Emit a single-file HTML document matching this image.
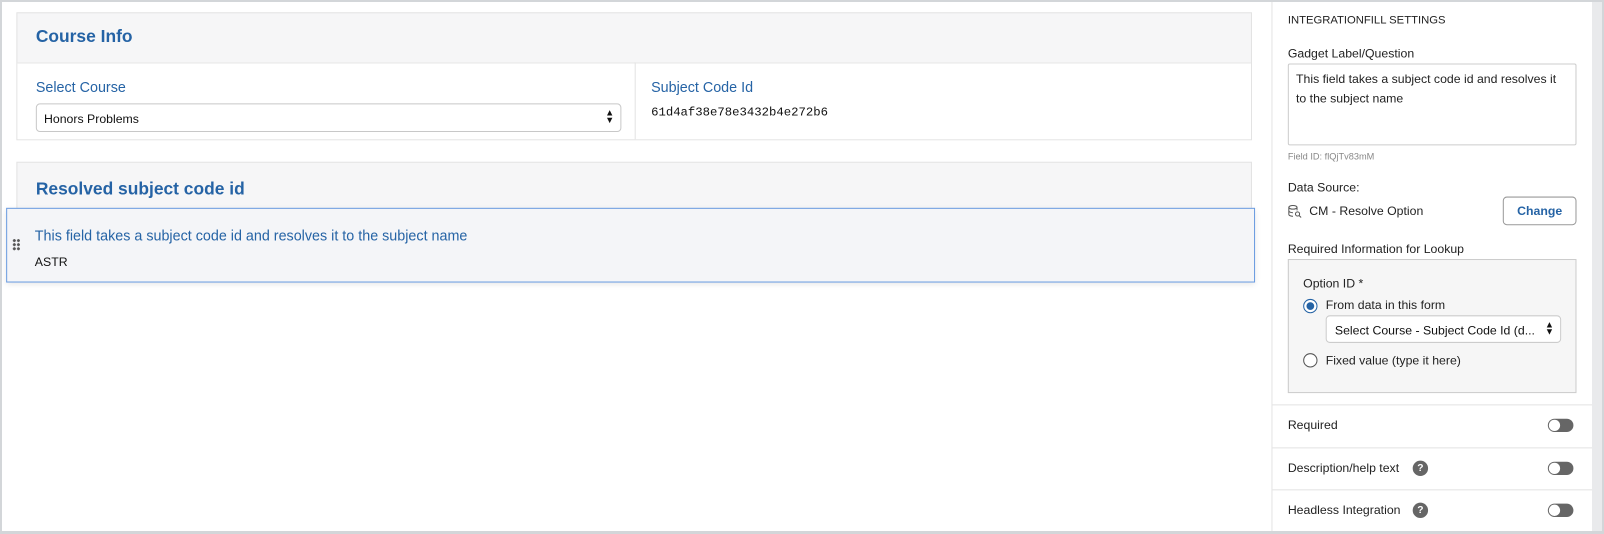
<!DOCTYPE html>
<html style="overflow:hidden"><head><style>
*{box-sizing:border-box;margin:0;padding:0}
html,body{width:1604px;height:534px;overflow:hidden}
body{background:#fff;font-family:"Liberation Sans",sans-serif;position:relative}
#clip{position:absolute;left:0;top:0;width:1604px;height:534px;overflow:hidden}
.frame{position:absolute;inset:0;border:2px solid #d3d6d9;border-bottom:3px solid #d3d6d9;z-index:5;pointer-events:none}
#w{position:absolute;left:0;top:0;width:1604px;height:522px;transform:scale(1.0237);transform-origin:0 0}
.abs{position:absolute}
.blue{color:#2563a5}
.sec{position:absolute;border:1px solid #e3e3e3;background:#f6f6f7}
.q{position:absolute;width:15px;height:15px;border-radius:50%;background:#666;color:#fff;font-size:10px;font-weight:bold;text-align:center;line-height:15px}
.tg{position:absolute;width:25px;height:13px;border-radius:7px;background:#666}
.tg div{position:absolute;left:1px;top:1px;width:11px;height:11px;border-radius:50%;background:#fff}
</style></head><body>
<div id="clip">
<div id="w">
<div class="sec" style="left:16px;top:12px;width:1207px;height:125px">
  <div class="abs blue" style="left:18px;top:13px;font-size:17px;font-weight:bold">Course Info</div>
  <div class="abs" style="left:0;top:48px;width:1205px;height:75px;background:#fff;border-top:1px solid #e6e6e6"></div>
  <div class="abs" style="left:603px;top:48px;width:1px;height:75px;background:#e3e3e3"></div>
  <div class="abs blue" style="left:18px;top:64px;font-size:14px">Select Course</div>
  <div class="abs" style="left:18px;top:88px;width:572px;height:28px;border:1px solid #c8c8c8;border-radius:4px;background:#fff;font-size:12px;padding:7px 7px;color:#111">Honors Problems<span style="position:absolute;right:6px;top:5px;font-size:9px;line-height:7px">▲<br>▼</span></div>
  <div class="abs blue" style="left:619px;top:64px;font-size:14px">Subject Code Id</div>
  <div class="abs" style="left:619px;top:90px;font-size:12px;font-family:'Liberation Mono',monospace;color:#111">61d4af38e78e3432b4e272b6</div>
</div>
<div class="sec" style="left:16px;top:158px;width:1207px;height:50px">
  <div class="abs blue" style="left:18px;top:16px;font-size:17px;font-weight:bold">Resolved subject code id</div>
</div>
<div class="abs" style="left:6px;top:203px;width:1220px;height:73px;background:#f4f5f8;border:1px solid #6a9be0;box-shadow:0 2px 6px rgba(0,0,0,.1)">
  <div class="abs blue" style="left:27px;top:18px;font-size:14px">This field takes a subject code id and resolves it to the subject name</div>
  <div class="abs" style="left:27px;top:45px;font-size:12px;color:#111">ASTR</div>
  <div class="abs" style="left:5px;top:29px;width:8px;height:12px;background:radial-gradient(circle,#555 1.3px,transparent 1.6px) 0 0/4px 4px"></div>
</div>
<div class="abs" style="left:1242px;top:0;width:1px;height:534px;background:#e3e3e3"></div>
<div class="abs" style="left:1258px;top:14px;font-size:11px;color:#222">INTEGRATIONFILL SETTINGS</div>
<div class="abs" style="left:1258px;top:45px;font-size:12px;color:#222">Gadget Label/Question</div>
<div class="abs" style="left:1258px;top:62px;width:282px;height:80px;border:1px solid #ccc;border-radius:2px;font-size:12px;line-height:19px;padding:5px 7px;color:#222">This field takes a subject code id and resolves it to the subject name</div>
<div class="abs" style="left:1258px;top:148px;font-size:9px;color:#888">Field ID: flQjTv83mM</div>
<div class="abs" style="left:1258px;top:176px;font-size:12px;color:#222">Data Source:</div>
<svg class="abs" style="left:1258px;top:200px" width="14" height="13" viewBox="0 0 14 13" fill="none" stroke="#555" stroke-width="1"><ellipse cx="5" cy="2.5" rx="4" ry="1.8"/><path d="M1 2.5v7c0 1 2 1.8 4 1.8M9 2.5v3M1 6c0 1 2 1.8 4 1.8"/><circle cx="9.5" cy="9" r="2"/><path d="M11 10.5l2 2"/></svg>
<div class="abs" style="left:1279px;top:199px;font-size:12px;color:#222">CM - Resolve Option</div>
<div class="abs blue" style="left:1468px;top:192px;width:72px;height:28px;border:1px solid #999;border-radius:4px;font-size:12px;font-weight:bold;text-align:center;line-height:26px">Change</div>
<div class="abs" style="left:1258px;top:236px;font-size:12px;color:#222">Required Information for Lookup</div>
<div class="abs" style="left:1258px;top:253px;width:282px;height:131px;border:1px solid #ccc;background:#f6f6f6"></div>
<div class="abs" style="left:1273px;top:270px;font-size:12px;color:#222">Option ID *</div>
<div class="abs" style="left:1273px;top:292px;width:14px;height:14px;border:1.5px solid #2563a5;border-radius:50%;background:radial-gradient(circle,#2563a5 3.5px,#fff 4px)"></div>
<div class="abs" style="left:1295px;top:291px;font-size:12px;color:#222">From data in this form</div>
<div class="abs" style="left:1295px;top:308px;width:230px;height:27px;border:1px solid #ccc;border-radius:4px;background:#fff;font-size:12px;padding:7px 8px;color:#111">Select Course - Subject Code Id (d...<span style="position:absolute;right:6px;top:5px;font-size:9px;line-height:7px">▲<br>▼</span></div>
<div class="abs" style="left:1273px;top:345px;width:14px;height:14px;border:1.5px solid #555;border-radius:50%;background:#fff"></div>
<div class="abs" style="left:1295px;top:345px;font-size:12px;color:#222">Fixed value (type it here)</div>
<div class="abs" style="left:1243px;top:395px;width:349px;height:1px;background:#e3e3e3"></div>
<div class="abs" style="left:1243px;top:437px;width:349px;height:1px;background:#e3e3e3"></div>
<div class="abs" style="left:1243px;top:478px;width:349px;height:1px;background:#e3e3e3"></div>
<div class="abs" style="left:1258px;top:408px;font-size:12px;color:#222">Required</div>
<div class="abs" style="left:1258px;top:450px;font-size:12px;color:#222;white-space:nowrap">Description/help text</div>
<div class="abs" style="left:1258px;top:491px;font-size:12px;color:#222;white-space:nowrap">Headless Integration</div>
<div class="q" style="left:1380px;top:450px">?</div>
<div class="q" style="left:1380px;top:491px">?</div>
<div class="tg" style="left:1512px;top:409px"><div></div></div>
<div class="tg" style="left:1512px;top:451px"><div></div></div>
<div class="tg" style="left:1512px;top:492px"><div></div></div>
</div>
<div class="abs" style="left:1592px;top:0;width:12px;height:534px;background:#e9eaec;z-index:4"></div>
<div class="frame"></div>
</div>
</body></html>
